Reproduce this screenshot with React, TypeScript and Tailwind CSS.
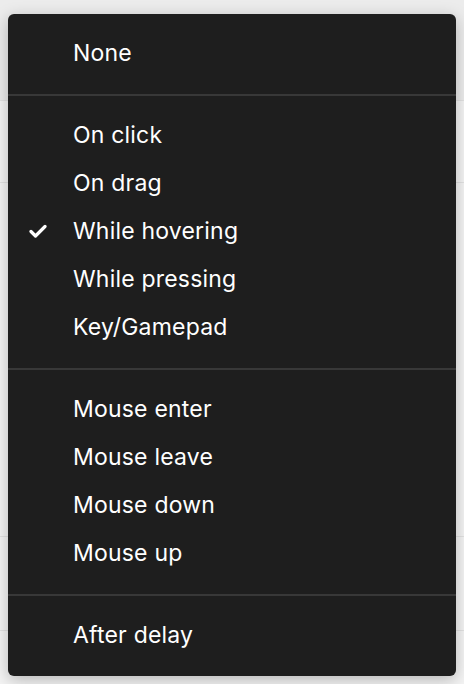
const groups: string[][] = [
  ["None"],
  ["On click", "On drag", "While hovering", "While pressing", "Key/Gamepad"],
  ["Mouse enter", "Mouse leave", "Mouse down", "Mouse up"],
  ["After delay"],
];

const selected = "While hovering";

function Check() {
  return (
    <svg width="18" height="15" viewBox="0 0 18 15" fill="none">
      <path
        d="M2 7.5l4.5 4.5L16 2.5"
        stroke="white"
        strokeWidth="3.2"
        strokeLinecap="round"
        strokeLinejoin="round"
      />
    </svg>
  );
}

export default function App() {
  return (
    <div
      className="relative h-[684px] w-[464px] overflow-hidden bg-[#f4f4f4]"
      style={{ fontFamily: "Inter, 'Liberation Sans', sans-serif" }}
    >
      {/* page behind the menu */}
      <div className="flex flex-col">
        <div className="h-[101px] border-b border-[#e2e2e2] bg-[#ececec]" />
        <div className="h-[82px] border-b border-[#e2e2e2]" />
        <div className="h-[354px] border-b border-[#e2e2e2]" />
        <div className="h-[94px] border-b border-[#e2e2e2]" />
      </div>

      {/* menu */}
      <div className="absolute left-[8px] top-[14px] w-[448px] rounded-md bg-[#1e1e1e] shadow-[0_4px_16px_rgba(0,0,0,0.25)]">
        {groups.map((items, gi) => (
          <div
            key={gi}
            className={
              "pt-[15px] pb-[17px] " + (gi > 0 ? "border-t-2 border-[#383838]" : "")
            }
          >
            {items.map((label) => (
              <div
                key={label}
                className="flex h-12 items-center text-[23px] tracking-[0.2px] text-white"
              >
                <span className="flex w-[65px] justify-end pr-[26px]">
                  {label === selected && <Check />}
                </span>
                <span>{label}</span>
              </div>
            ))}
          </div>
        ))}
      </div>
    </div>
  );
}
